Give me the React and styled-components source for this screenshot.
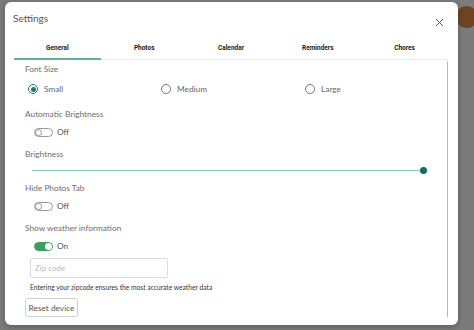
import styled, { createGlobalStyle } from 'styled-components';

const GlobalStyle = createGlobalStyle`
  html, body {
    margin: 0;
    padding: 0;
    background: #7b7b7b;
  }
  * {
    box-sizing: border-box;
  }
`;

const Backdrop = styled.div`
  position: relative;
  width: 474px;
  height: 330px;
  overflow: hidden;
  background: #7b7b7b;
  padding: 2px 16px 5px 5px;
  font-family: Lato, 'Open Sans', sans-serif;
`;

const Avatar = styled.div`
  position: absolute;
  right: -4px;
  top: 6px;
  width: 22px;
  height: 22px;
  border-radius: 50%;
  background: #6e4423;
`;

const Dialog = styled.div`
  position: relative;
  height: 100%;
  background: #fff;
  border-radius: 6px;
  display: flex;
  flex-direction: column;
  padding: 0 10px 8px 9px;
  box-shadow: 0 2px 6px rgba(0, 0, 0, 0.25);
`;

const Header = styled.div`
  display: flex;
  align-items: center;
  justify-content: space-between;
  height: 38px;
`;

const Title = styled.div`
  font-size: 10px;
  color: #555;
  margin-top: -6px;
  margin-left: -1px;
`;

const Close = styled.button`
  border: none;
  background: none;
  padding: 0;
  margin: 2px 2px 0 0;
  width: 14px;
  height: 14px;
  display: flex;
  align-items: center;
  justify-content: center;
  cursor: pointer;
`;

const Tabs = styled.div`
  display: grid;
  grid-template-columns: repeat(5, 1fr);
  border-bottom: 1px solid #ececec;
  height: 20px;
`;

const Tab = styled.div`
  display: flex;
  align-items: center;
  justify-content: center;
  font-family: Roboto, sans-serif;
  font-weight: 700;
  font-size: 6.5px;
  color: #222;
  border-bottom: 2px solid ${(p) => (p.$active ? '#5bb393' : 'transparent')};
  margin-bottom: -1px;
  padding-bottom: 3px;
`;

const Panel = styled.div`
  flex: 1;
  border-right: 1px solid #b5b5b5;
  margin-top: 1px;
  padding: 0 0 0 11px;
  display: flex;
  flex-direction: column;
`;

const Label = styled.div`
  height: 16px;
  display: flex;
  align-items: center;
  font-size: 8.3px;
  color: #6e6e6e;
  margin-top: ${(p) => p.$gap || 0}px;
`;

const RadioRow = styled.div`
  display: grid;
  grid-template-columns: 133px 144px 1fr;
  height: 24px;
  align-items: center;
  padding-left: 3px;
`;

const RadioOption = styled.div`
  display: flex;
  align-items: center;
  gap: 6px;
  font-size: 8.3px;
  color: #666;
`;

const RadioCircle = styled.span`
  width: 10px;
  height: 10px;
  border-radius: 50%;
  border: 1.2px solid ${(p) => (p.$checked ? '#1d7a70' : '#777')};
  display: flex;
  align-items: center;
  justify-content: center;
  &::after {
    content: '';
    width: 5px;
    height: 5px;
    border-radius: 50%;
    background: ${(p) => (p.$checked ? '#1d7a70' : 'transparent')};
  }
`;

const ToggleRow = styled.div`
  height: 20px;
  display: flex;
  align-items: center;
  gap: 4px;
  padding-left: 9px;
  font-size: 8.3px;
  color: #555;
`;

const Switch = styled.span`
  position: relative;
  width: 19px;
  height: 9px;
  border-radius: 5px;
  border: 1px solid ${(p) => (p.$on ? '#3f9d60' : '#999')};
  background: ${(p) => (p.$on ? '#3f9d60' : '#fff')};
  &::after {
    content: '';
    position: absolute;
    top: 0px;
    left: ${(p) => (p.$on ? '10px' : '0px')};
    width: 7px;
    height: 7px;
    border-radius: 50%;
    background: #fff;
    border: ${(p) => (p.$on ? 'none' : '1px solid #999')};
    box-sizing: border-box;
  }
`;

const SliderRow = styled.div`
  height: 16px;
  display: flex;
  align-items: center;
  padding: 0 23px 0 7px;
`;

const Track = styled.div`
  position: relative;
  flex: 1;
  height: 1px;
  background: #8cc7b4;
`;

const Thumb = styled.span`
  position: absolute;
  right: -3px;
  top: -3px;
  width: 7px;
  height: 7px;
  border-radius: 50%;
  background: #0f6c64;
`;

const ZipInput = styled.input`
  width: 138px;
  height: 20px;
  margin: 2px 0 0 5px;
  border: 1px solid #dcdcdc;
  border-radius: 2px;
  padding: 0 4px;
  font-family: Lato, sans-serif;
  font-size: 8px;
  color: #555;
  outline: none;
  &::placeholder {
    color: #b8b8b8;
  }
`;

const Helper = styled.div`
  height: 10px;
  margin: 4px 0 0 5px;
  display: flex;
  align-items: center;
  font-size: 6.7px;
  color: #333;
`;

const ResetButton = styled.button`
  align-self: flex-start;
  margin-top: 6px;
  height: 19px;
  width: 53px;
  padding: 0;
  border: 1px solid #cfcfcf;
  border-radius: 3px;
  background: #fff;
  font-family: Lato, sans-serif;
  font-size: 8.3px;
  color: #555;
  cursor: pointer;
`;

const tabs = ['General', 'Photos', 'Calendar', 'Reminders', 'Chores'];
const sizes = ['Small', 'Medium', 'Large'];

const Toggle = ({ on }) => (
  <ToggleRow>
    <Switch $on={on} />
    {on ? 'On' : 'Off'}
  </ToggleRow>
);

export default function App() {
  return (
    <>
      <GlobalStyle />
      <Backdrop>
        <Avatar />
        <Dialog>
          <Header>
            <Title>Settings</Title>
            <Close aria-label="close">
              <svg width="9" height="9" viewBox="0 0 9 9">
                <path d="M1 1 L8 8 M8 1 L1 8" stroke="#555" strokeWidth="1" />
              </svg>
            </Close>
          </Header>
          <Tabs>
            {tabs.map((t, i) => (
              <Tab key={t} $active={i === 0}>
                {t}
              </Tab>
            ))}
          </Tabs>
          <Panel>
            <Label>Font Size</Label>
            <RadioRow>
              {sizes.map((s, i) => (
                <RadioOption key={s}>
                  <RadioCircle $checked={i === 0} />
                  {s}
                </RadioOption>
              ))}
            </RadioRow>
            <Label $gap={5}>Automatic Brightness</Label>
            <Toggle on={false} />
            <Label $gap={4}>Brightness</Label>
            <SliderRow>
              <Track>
                <Thumb />
              </Track>
            </SliderRow>
            <Label $gap={2}>Hide Photos Tab</Label>
            <Toggle on={false} />
            <Label $gap={4}>Show weather information</Label>
            <Toggle on />
            <ZipInput placeholder="Zip code" />
            <Helper>Entering your zipcode ensures the most accurate weather data</Helper>
            <ResetButton>Reset device</ResetButton>
          </Panel>
        </Dialog>
      </Backdrop>
    </>
  );
}
